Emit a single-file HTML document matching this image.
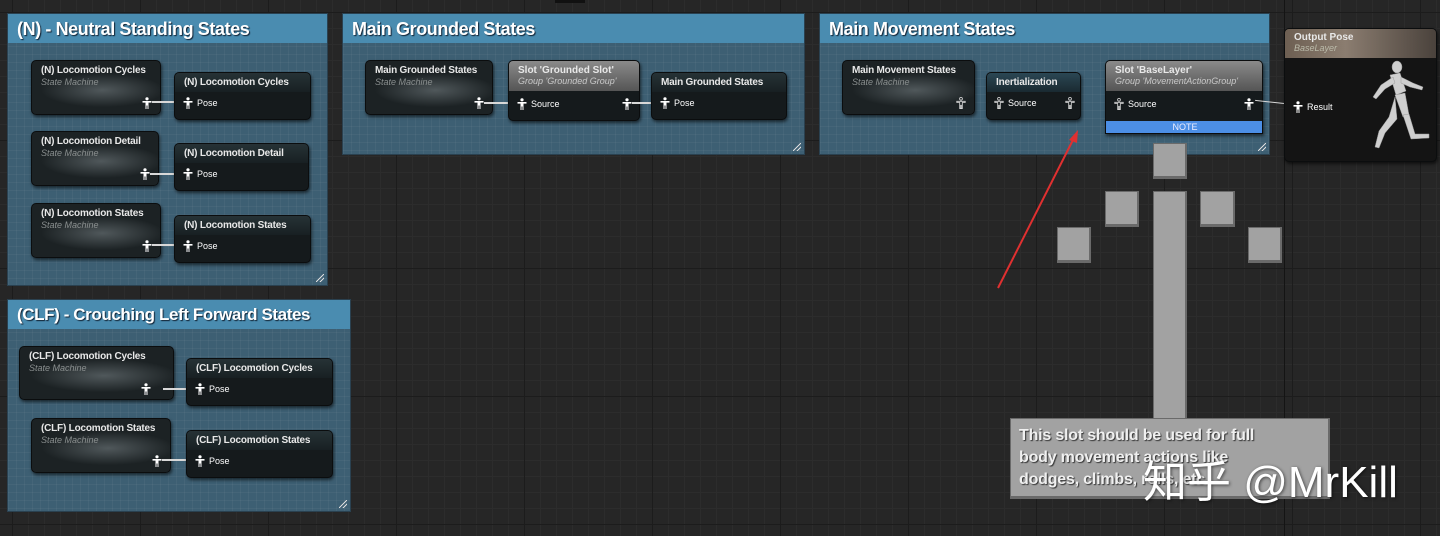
<!DOCTYPE html>
<html><head><meta charset="utf-8"><style>
*{margin:0;padding:0;box-sizing:border-box}
body{width:1440px;height:536px;overflow:hidden;position:relative;font-family:"Liberation Sans",sans-serif;
background-color:#262626;
background-image:linear-gradient(#1c1c1c 1px,transparent 1px),linear-gradient(90deg,#1c1c1c 1px,transparent 1px),linear-gradient(#2c2c2c 1px,transparent 1px),linear-gradient(90deg,#2c2c2c 1px,transparent 1px);
background-size:128px 128px,128px 128px,16px 16px,16px 16px;background-position:12px 12px,12px 12px,12px 12px,12px 12px}
.a{position:absolute}
.cm{position:absolute;background:#3d5f73;border:1px solid #2a4150;
background-image:linear-gradient(rgba(255,255,255,.04) 1px,transparent 1px),linear-gradient(90deg,rgba(255,255,255,.04) 1px,transparent 1px);background-size:8px 8px}
.cm .h{height:29px;background:#4a8cb0;color:#fff;font-weight:bold;font-size:18px;padding:5px 9px;text-shadow:1px 1px 1px #123;white-space:nowrap;letter-spacing:-0.4px}
.cm .rs{position:absolute;right:3px;bottom:3px;width:8px;height:8px;background:linear-gradient(135deg,transparent 45%,#ddd 45%,#ddd 55%,transparent 55%,transparent 70%,#ddd 70%,#ddd 80%,transparent 80%)}
.n{position:absolute;border-radius:5px;background:#151a1c;border:1px solid #0b0d0e;box-shadow:1px 2px 3px rgba(0,0,0,.6);color:#e8e8e8;font-size:10px;overflow:hidden;white-space:nowrap}
.sm{background:radial-gradient(ellipse 60% 40% at 55% 55%,#50585b,#1c2224 80%)}
.n .t{padding:4px 9px 0;font-weight:bold;font-size:10px;letter-spacing:-0.2px}
.n .s{padding:1px 9px;font-style:italic;color:#8a8f8f;font-size:9px}
.n .hd{height:19px;background:linear-gradient(#263236,#182023);padding:4px 9px 0;font-weight:bold;font-size:10px;letter-spacing:-0.2px}
.n .hg{height:30px;background:linear-gradient(#8a8a8a,#555);padding:4px 9px 0;font-weight:bold;font-size:10px}
.n .hg i{display:block;color:#c8c8c8;font-size:9px;font-weight:normal}
.pin{position:absolute;font-size:9px;color:#fff;display:flex;align-items:center;gap:4px}
svg.p{width:10px;height:12px}
.w{position:absolute;height:2px;background:#d8d8d8}
.g{position:absolute;background:#a2a2a2;border:2px solid #6a6a6a;border-width:1px 2px 3px 1px}
</style></head><body>
<svg width="0" height="0" style="position:absolute"><defs><symbol id="p" viewBox="0 0 10 12"><circle cx="5" cy="1.8" r="1.6" fill="#fff"/><path d="M0.5 4h9v1.6H6.5V12H5.5V8.5h-1V12H3.5V5.6H0.5z" fill="#fff"/></symbol>
<symbol id="q" viewBox="0 0 10 12"><circle cx="5" cy="1.8" r="1.4" fill="none" stroke="#ddd" stroke-width=".8"/><path d="M0.8 4.3h8.4v1.2H6.3V11.6H5.3V8.3H4.7V11.6H3.7V5.5H0.8z" fill="none" stroke="#ddd" stroke-width=".8"/></symbol></defs></svg>
<div class="a" style="left:555px;top:0;width:30px;height:3px;background:#111"></div>
<div class="a" style="left:1284px;top:0;width:1px;height:536px;background:#141414"></div>

<!-- N -->
<div class="cm" style="left:7px;top:13px;width:321px;height:273px"><div class="h">(N) - Neutral Standing States</div><div class="rs"></div></div>
<div class="n sm" style="left:31px;top:60px;width:130px;height:55px"><div class="t">(N) Locomotion Cycles</div><div class="s">State Machine</div><svg class="p a" style="left:110px;top:36px"><use href="#p"/></svg></div>
<div class="w" style="left:152px;top:101px;width:32px"></div>
<div class="n" style="left:174px;top:72px;width:137px;height:48px"><div class="hd">(N) Locomotion Cycles</div><div class="pin" style="left:8px;top:24px"><svg class="p"><use href="#p"/></svg>Pose</div></div>
<div class="n sm" style="left:31px;top:131px;width:128px;height:55px"><div class="t">(N) Locomotion Detail</div><div class="s">State Machine</div><svg class="p a" style="left:108px;top:36px"><use href="#p"/></svg></div>
<div class="w" style="left:150px;top:173px;width:34px"></div>
<div class="n" style="left:174px;top:143px;width:135px;height:48px"><div class="hd">(N) Locomotion Detail</div><div class="pin" style="left:8px;top:24px"><svg class="p"><use href="#p"/></svg>Pose</div></div>
<div class="n sm" style="left:31px;top:203px;width:130px;height:55px"><div class="t">(N) Locomotion States</div><div class="s">State Machine</div><svg class="p a" style="left:110px;top:36px"><use href="#p"/></svg></div>
<div class="w" style="left:152px;top:244px;width:32px"></div>
<div class="n" style="left:174px;top:215px;width:137px;height:48px"><div class="hd">(N) Locomotion States</div><div class="pin" style="left:8px;top:24px"><svg class="p"><use href="#p"/></svg>Pose</div></div>

<!-- CLF -->
<div class="cm" style="left:7px;top:299px;width:344px;height:213px"><div class="h" style="font-size:17px">(CLF) - Crouching Left Forward States</div><div class="rs"></div></div>
<div class="n sm" style="left:19px;top:346px;width:155px;height:54px"><div class="t">(CLF) Locomotion Cycles</div><div class="s">State Machine</div><svg class="p a" style="left:121px;top:36px"><use href="#p"/></svg></div>
<div class="w" style="left:163px;top:388px;width:33px"></div>
<div class="n" style="left:186px;top:358px;width:147px;height:48px"><div class="hd">(CLF) Locomotion Cycles</div><div class="pin" style="left:8px;top:24px"><svg class="p"><use href="#p"/></svg>Pose</div></div>
<div class="n sm" style="left:31px;top:418px;width:140px;height:55px"><div class="t">(CLF) Locomotion States</div><div class="s">State Machine</div><svg class="p a" style="left:120px;top:36px"><use href="#p"/></svg></div>
<div class="w" style="left:162px;top:459px;width:34px"></div>
<div class="n" style="left:186px;top:430px;width:147px;height:48px"><div class="hd">(CLF) Locomotion States</div><div class="pin" style="left:8px;top:24px"><svg class="p"><use href="#p"/></svg>Pose</div></div>

<!-- Grounded -->
<div class="cm" style="left:342px;top:13px;width:463px;height:142px"><div class="h">Main Grounded States</div><div class="rs"></div></div>
<div class="n sm" style="left:365px;top:60px;width:128px;height:55px"><div class="t">Main Grounded States</div><div class="s">State Machine</div><svg class="p a" style="left:108px;top:36px"><use href="#p"/></svg></div>
<div class="w" style="left:484px;top:102px;width:34px"></div>
<div class="n" style="left:508px;top:60px;width:132px;height:61px"><div class="hg">Slot 'Grounded Slot'<i>Group 'Grounded Group'</i></div><div class="pin" style="left:8px;top:37px"><svg class="p"><use href="#p"/></svg>Source</div><svg class="p a" style="left:113px;top:37px"><use href="#p"/></svg></div>
<div class="w" style="left:632px;top:102px;width:28px"></div>
<div class="n" style="left:651px;top:72px;width:136px;height:48px"><div class="hd">Main Grounded States</div><div class="pin" style="left:8px;top:24px"><svg class="p"><use href="#p"/></svg>Pose</div></div>

<!-- Movement -->
<div class="cm" style="left:819px;top:13px;width:451px;height:142px"><div class="h">Main Movement States</div><div class="rs"></div></div>
<div class="n sm" style="left:842px;top:60px;width:133px;height:55px"><div class="t">Main Movement States</div><div class="s">State Machine</div><svg class="p a" style="left:113px;top:36px"><use href="#q"/></svg></div>
<div class="n" style="left:986px;top:72px;width:95px;height:48px"><div class="hd" style="background:linear-gradient(#2b4754,#1a2a31)">Inertialization</div><div class="pin" style="left:7px;top:24px"><svg class="p"><use href="#q"/></svg>Source</div><svg class="p a" style="left:78px;top:24px"><use href="#q"/></svg></div>
<div class="n" style="left:1105px;top:60px;width:158px;height:74px;border-radius:5px 5px 0 0"><div class="hg">Slot 'BaseLayer'<i>Group 'MovementActionGroup'</i></div><div class="pin" style="left:8px;top:37px"><svg class="p"><use href="#q"/></svg>Source</div><svg class="p a" style="left:138px;top:37px"><use href="#p"/></svg><div class="a" style="left:0;bottom:0;width:158px;height:12px;background:#4c8fe6;color:#eef;font-size:9px;text-align:center;line-height:12px">NOTE</div></div>
<div class="w" style="left:1255px;top:102px;width:40px;transform:rotate(6deg);height:1px"></div>

<!-- Output -->
<div class="n" style="left:1284px;top:28px;width:153px;height:134px;background:#141414"><div style="height:29px;background:linear-gradient(90deg,#6d5f52,#8b7d70 40%,#4a423c);padding:3px 9px;font-weight:bold">Output Pose<i style="display:block;color:#bba;font-weight:normal;font-size:9px">BaseLayer</i></div>
<div class="pin" style="left:8px;top:72px"><svg class="p"><use href="#p"/></svg>Result</div>
<svg class="a" style="left:72px;top:30px" width="80" height="100" viewBox="0 0 80 100"><g fill="#cfcfcf" stroke="#999" stroke-width=".5"><ellipse cx="40" cy="8" rx="5" ry="6"/><path d="M33 16l10-2 6 18-10 4z"/><path d="M36 18l-12 8-8 12 3 2 9-10 10-6z"/><path d="M44 18l12 6 10 4-1 3-12-3-9-4z"/><path d="M38 36l10-2 4 22-6 2z"/><path d="M46 56l6-1 6 20 14 0 0 4-18 1z"/><path d="M38 38l-6 20-10 14-4 16 4 1 6-15 12-14z"/></g></svg></div>

<!-- gray boxes -->
<div class="g" style="left:1153px;top:143px;width:34px;height:36px"></div>
<div class="g" style="left:1105px;top:191px;width:34px;height:36px"></div>
<div class="g" style="left:1200px;top:191px;width:35px;height:36px"></div>
<div class="g" style="left:1057px;top:227px;width:34px;height:36px"></div>
<div class="g" style="left:1248px;top:227px;width:34px;height:36px"></div>
<div class="g" style="left:1153px;top:191px;width:34px;height:230px"></div>
<div class="g" style="left:1010px;top:418px;width:320px;height:81px;padding:6px 50px 6px 8px;color:#f0f0f0;font-weight:bold;font-size:16px;line-height:22px;text-shadow:1px 1px 1px #333;letter-spacing:-0.2px">This slot should be used for full body movement actions like dodges, climbs, rolls, etc.</div>

<svg class="a" style="left:990px;top:120px" width="100" height="175"><line x1="8" y1="168" x2="86" y2="14" stroke="#e03030" stroke-width="2"/><path d="M88 10l-9 10 8 3z" fill="#e03030"/></svg>
<div class="a" style="left:1143px;top:446px;color:#fff;font-size:44px;font-family:'Liberation Sans','Noto Sans CJK SC',sans-serif;text-shadow:1px 1px 3px rgba(0,0,0,.6);white-space:nowrap">知乎 @MrKill</div>
</body></html>
